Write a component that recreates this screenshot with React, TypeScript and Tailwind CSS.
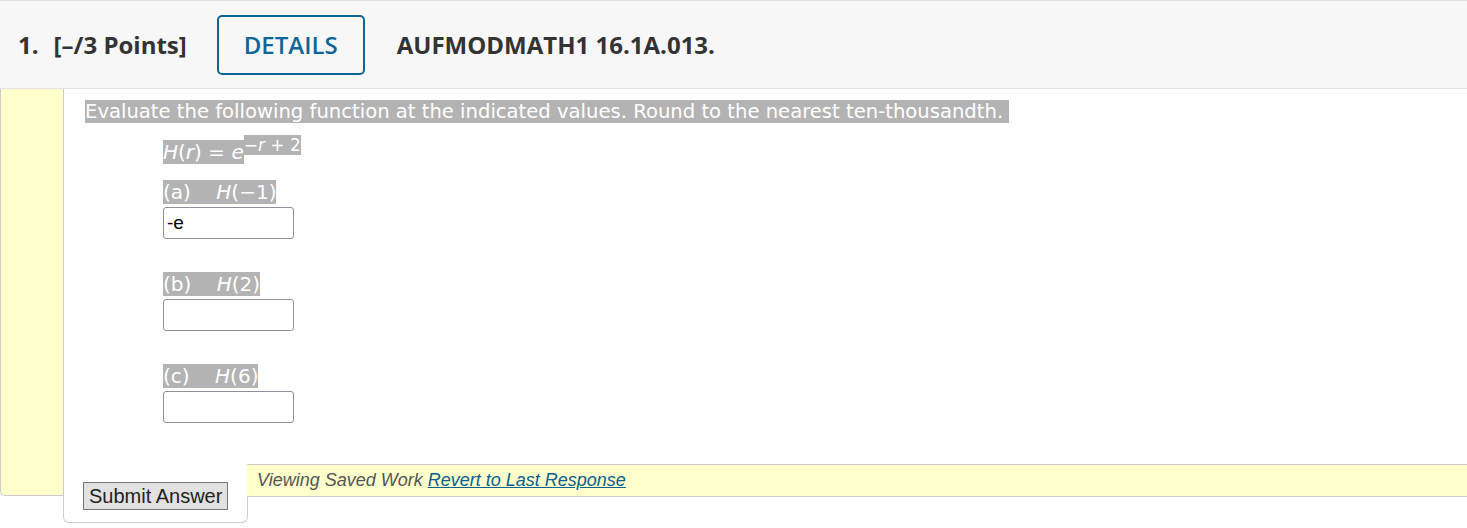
const HL = 'bg-[#b3b3b3] text-white'

function AnswerField(props: { label: string; arg: string; value?: string }) {
  return (
    <div className="flex flex-col items-start">
      <div className="text-[20px] leading-[24px]">
        <span className={HL}>
          ({props.label})&nbsp;&nbsp;&nbsp; <i>H</i>({props.arg})
        </span>
      </div>
      <input
        readOnly
        value={props.value ?? ''}
        className="mt-[3px] h-[32px] w-[131px] rounded-[3px] border border-[#8f8f9d] bg-white px-[3px] font-['Liberation_Sans',Arial,sans-serif] text-[19px] text-black outline-none"
      />
    </div>
  )
}

export default function App() {
  return (
    <div className="w-[1467px] bg-white font-['DejaVu_Sans',Verdana,sans-serif]">
      <header className="flex h-[89px] items-center border-t border-b border-[#e2e2e2] bg-[#f7f7f7] px-[18px] font-['Open_Sans',sans-serif] text-[24px] font-bold text-[#333]">
        <span>1.</span>
        <span className="ml-[15px]">[–/3 Points]</span>
        <span className="ml-[30px] flex h-[60px] w-[148px] items-center justify-center rounded-[5px] border-2 border-[#0e6598] font-semibold text-[#0e6598]">
          DETAILS
        </span>
        <span className="ml-[32px]">AUFMODMATH1 16.1A.013.</span>
      </header>

      <div className="flex items-start">
        <div className="h-[407px] w-[63px] shrink-0 rounded-bl-[5px] border-b border-l border-[#cccccc] bg-[#ffffcc]" />

        <div className="flex flex-1 flex-col">
          <div className="h-[375px] border-l border-[#cccccc] pl-[21px] pt-[11px]">
            <p className="text-[19.6px] leading-[24px]">
              <span className={HL}>
                Evaluate the following function at the indicated values. Round to the nearest ten-thousandth.&nbsp;
              </span>
            </p>

            <div className="ml-[78px] mt-[16px] flex flex-col">
              <div className="text-[20px] leading-[24px]">
                <span className={HL}>
                  <i>H</i>(<i>r</i>) = <i>e</i>
                </span>
                <sup className="relative top-[-8px] text-[17px]">
                  <span className={HL}>
                    −<i>r</i> + 2
                  </span>
                </sup>
              </div>

              <div className="mt-[16px] flex flex-col gap-[33px]">
                <AnswerField label="a" arg="−1" value="-e" />
                <AnswerField label="b" arg="2" />
                <AnswerField label="c" arg="6" />
              </div>
            </div>
          </div>

          <div className="flex items-start">
            <div className="flex h-[59px] w-[185px] shrink-0 items-start rounded-b-[6px] border-x border-b border-[#cccccc] bg-white pl-[19px] pt-[18px]">
              <button className="h-[28px] border border-[#767676] bg-[#e1e1e1] px-[5px] font-['Liberation_Sans',Arial,sans-serif] text-[20px] leading-none text-[#222]">
                Submit Answer
              </button>
            </div>
            <div className="-ml-px flex h-[33px] flex-1 items-center border-y border-[#cccccc] bg-[#ffffcc] pl-[10px] font-['Liberation_Sans',Arial,sans-serif] text-[18px] italic text-[#555]">
              Viewing Saved Work&nbsp;
              <a href="#" className="text-[#0a5e91] underline">
                Revert to Last Response
              </a>
            </div>
          </div>
        </div>
      </div>
    </div>
  )
}
